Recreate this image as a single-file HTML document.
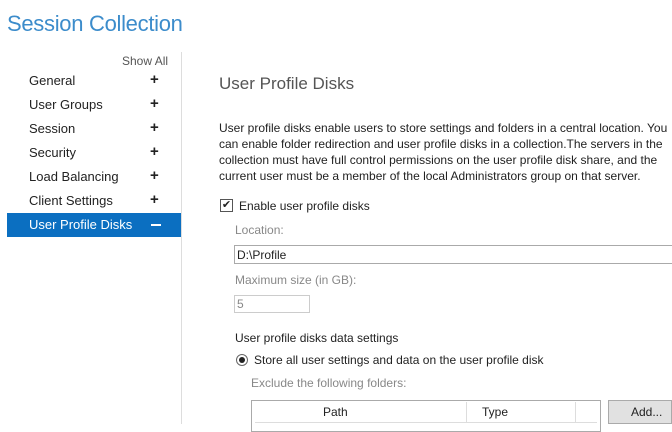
<!DOCTYPE html>
<html><head><style>
body{margin:0;width:672px;height:424px;overflow:hidden;background:#fff;font-family:"Liberation Sans",sans-serif;position:relative;color:#222}
div,span{position:absolute;white-space:nowrap}
.nav{left:29px;font-size:13px;color:#222}
.pl{left:150px;font-size:15px;font-weight:bold;color:#222}
.p{left:219px;font-size:12px;color:#222}
.g{color:#888}
</style></head><body>
<div style="left:7px;top:11px;font-size:22px;color:#3c8ccb;letter-spacing:-0.3px">Session Collection</div>
<div style="left:122px;top:54px;font-size:12px;color:#555">Show All</div>
<div style="left:181px;top:52px;width:1px;height:372px;background:#ddd"></div>
<div class="nav" style="top:73px">General</div><div class="pl" style="top:71px">+</div>
<div class="nav" style="top:97px">User Groups</div><div class="pl" style="top:95px">+</div>
<div class="nav" style="top:121px">Session</div><div class="pl" style="top:119px">+</div>
<div class="nav" style="top:145px">Security</div><div class="pl" style="top:143px">+</div>
<div class="nav" style="top:169px">Load Balancing</div><div class="pl" style="top:167px">+</div>
<div class="nav" style="top:193px">Client Settings</div><div class="pl" style="top:191px">+</div>
<div style="left:7px;top:213px;width:174px;height:24px;background:#0b6fc1"></div>
<div class="nav" style="top:217px;color:#fff">User Profile Disks</div>
<div style="left:151px;top:224px;width:10px;height:2px;background:#fff"></div>
<div style="left:219px;top:74px;font-size:17px;color:#555">User Profile Disks</div>
<div class="p" style="top:120px;line-height:16px">User profile disks enable users to store settings and folders in a central location. You<br>can enable folder redirection and user profile disks in a collection.The servers in the<br>collection must have full control permissions on the user profile disk share, and the<br>current user must be a member of the local Administrators group on that server.</div>
<div style="left:220px;top:199px;width:11px;height:11px;border:1px solid #555;font-size:11px;line-height:11px;text-align:center">✔</div>
<div class="p" style="left:239px;top:199px">Enable user profile disks</div>
<div class="p g" style="left:235px;top:223px">Location:</div>
<div style="left:234px;top:245px;width:440px;height:17px;border:1px solid #aaa"></div>
<div class="p" style="left:237px;top:248px">D:\Profile</div>
<div class="p g" style="left:235px;top:273px">Maximum size (in GB):</div>
<div style="left:234px;top:295px;width:74px;height:16px;border:1px solid #ccc"></div>
<div class="p g" style="left:237px;top:297px">5</div>
<div class="p" style="left:235px;top:331px">User profile disks data settings</div>
<div style="left:236px;top:354px;width:10px;height:10px;border:1px solid #666;border-radius:50%"></div>
<div style="left:239px;top:357px;width:6px;height:6px;background:#222;border-radius:50%"></div>
<div class="p" style="left:254px;top:353px">Store all user settings and data on the user profile disk</div>
<div class="p g" style="left:251px;top:376px">Exclude the following folders:</div>
<div style="left:251px;top:400px;width:348px;height:30px;border:1px solid #aaa"></div>
<div style="left:466px;top:402px;width:1px;height:20px;background:#ddd"></div>
<div style="left:575px;top:402px;width:1px;height:20px;background:#ddd"></div>
<div style="left:255px;top:422px;width:342px;height:1px;background:#ddd"></div>
<div class="p" style="left:323px;top:405px">Path</div>
<div class="p" style="left:482px;top:405px">Type</div>
<div style="left:608px;top:400px;width:62px;height:22px;border:1px solid #aaa;background:#e1e1e1"></div>
<div class="p" style="left:631px;top:405px">Add...</div>
</body></html>
